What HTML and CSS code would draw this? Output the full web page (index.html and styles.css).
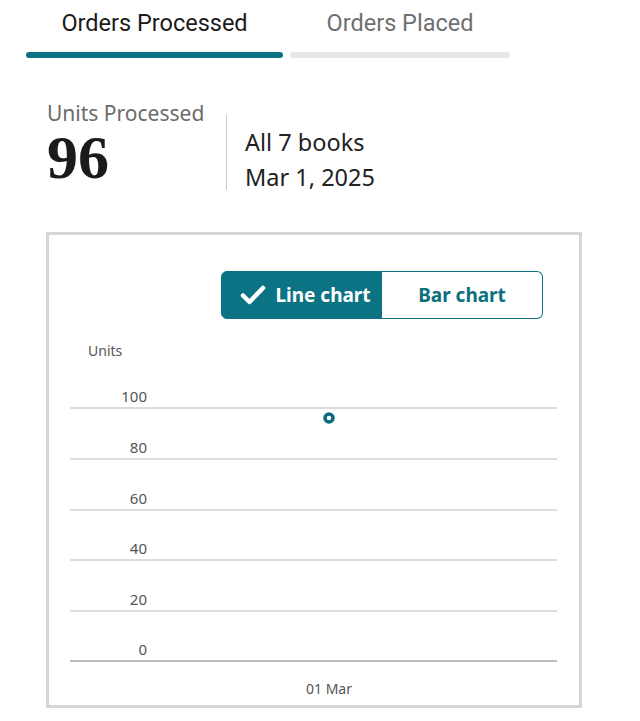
FILE: index.html
```html
<html lang="en">
<head>
<meta charset="UTF-8" />
<meta name="viewport" content="width=device-width, initial-scale=1.0" />
<title>Orders</title>
<link rel="stylesheet" href="styles.css">
</head>
<body>

<!-- Вкладки -->
<div class="tabs">
  <div class="tab active">
    <div class="tab-label">Orders Processed</div>
    <div class="tab-bar"></div>
  </div>
  <div class="tab">
    <div class="tab-label">Orders Placed</div>
    <div class="tab-bar"></div>
  </div>
</div>

<!-- Итоги -->
<div class="summary">
  <div class="total">
    <div class="total-label">Units Processed</div>
    <div class="total-value">96</div>
  </div>
  <div class="scope">
    <div>All 7 books</div>
    <div>Mar 1, 2025</div>
  </div>
</div>

<!-- График -->
<div class="chart-card">
  <div class="toggle">
    <button class="toggle-btn selected">
      <svg width="26" height="20" viewBox="0 0 26 20"><path d="M3 10.5 L9.5 17 L23 3" fill="none" stroke="#fff" stroke-width="4.5" stroke-linecap="round" stroke-linejoin="round"/></svg>
      Line chart
    </button>
    <button class="toggle-btn">Bar chart</button>
  </div>

  <svg class="plot" width="530" height="375" viewBox="0 0 530 375">
    <text x="39" y="26" class="axis-title">Units</text>
    <g class="grid">
      <line x1="21" y1="78" x2="508" y2="78" />
      <line x1="21" y1="129" x2="508" y2="129" />
      <line x1="21" y1="180" x2="508" y2="180" />
      <line x1="21" y1="230" x2="508" y2="230" />
      <line x1="21" y1="281" x2="508" y2="281" />
      <line x1="21" y1="331" x2="508" y2="331" class="base" />
    </g>
    <g class="ticks">
      <text x="98" y="72">100</text>
      <text x="98" y="123">80</text>
      <text x="98" y="174">60</text>
      <text x="98" y="224">40</text>
      <text x="98" y="275">20</text>
      <text x="98" y="325">0</text>
    </g>
    <circle cx="280" cy="88" r="4" class="point" />
    <text x="280" y="364" class="x-label">01 Mar</text>
  </svg>
</div>

</body>
</html>
```

FILE: styles.css
```css
body {
  font-family: "Noto Sans", "Open Sans", sans-serif;
  background-color: #fff;
  color: #222;
  margin: 0;
  padding: 0;
}
.tabs {
  display: flex;
  gap: 7px;
  padding: 6px 0 0 26px;
}
.tab {
  text-align: center;
}
.tab:first-child {
  width: 257px;
}
.tab:last-child {
  width: 220px;
}
.tab-label {
  font-family: Roboto, "Noto Sans", sans-serif;
  font-size: 23.5px;
  line-height: 35px;
  color: #6f6f6f;
}
.tab.active .tab-label {
  color: #1b1b1b;
}
.tab-bar {
  margin-top: 11px;
  height: 6px;
  border-radius: 3px;
  background-color: #e6e6e6;
}
.tab.active .tab-bar {
  background-color: #0b7383;
}
.summary {
  display: flex;
  align-items: flex-start;
  margin: 41px 0 0 47px;
}
.total {
  width: 179px;
}
.total-label {
  font-size: 21px;
  line-height: 28px;
  color: #6b6b6b;
}
.total-value {
  font-family: "Liberation Serif", "DejaVu Serif", serif;
  font-weight: bold;
  font-size: 62px;
  line-height: 60px;
  color: #1b1b1b;
}
.scope {
  margin-top: 16px;
  border-left: 1px solid #c9c9c9;
  padding: 10px 0 0 18px;
  height: 65px;
  font-size: 23.5px;
  line-height: 35px;
  color: #222;
}
.chart-card {
  margin: 42px 0 0 46px;
  width: 530px;
  border: 3px solid #d6d6d6;
  padding-top: 36px;
}
.toggle {
  display: flex;
  justify-content: flex-end;
  padding-right: 36px;
}
.toggle-btn {
  display: flex;
  align-items: center;
  justify-content: center;
  gap: 9px;
  width: 161px;
  height: 48px;
  font-family: "Noto Sans", sans-serif;
  font-size: 19px;
  font-weight: bold;
  color: #0b6f7e;
  background-color: #fff;
  border: 1.5px solid #0b7383;
  border-left: none;
  border-radius: 0 6px 6px 0;
  padding: 0;
}
.toggle-btn.selected {
  color: #fff;
  background-color: #0b7383;
  border-left: 1.5px solid #0b7383;
  border-radius: 6px 0 0 6px;
  padding-left: 8px;
}
.plot {
  display: block;
  margin-top: 11px;
  font-family: "Noto Sans", sans-serif;
}
.axis-title {
  font-size: 14px;
  fill: #555;
}
.grid line {
  stroke: #d2d2d2;
  stroke-width: 1.5;
}
.grid line.base {
  stroke: #bdbdbd;
  stroke-width: 2;
}
.ticks text {
  font-size: 15px;
  fill: #555;
  text-anchor: end;
}
.point {
  fill: #fff;
  stroke: #0b6a80;
  stroke-width: 3.5;
}
.x-label {
  font-size: 14px;
  fill: #555;
  text-anchor: middle;
}
```
